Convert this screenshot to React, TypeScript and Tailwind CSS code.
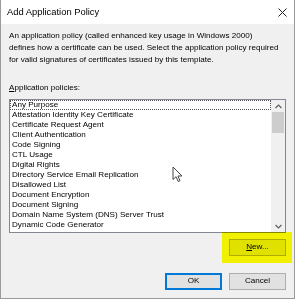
import React from "react";

const items = [
  "Any Purpose",
  "Attestation Identity Key Certificate",
  "Certificate Request Agent",
  "Client Authentication",
  "Code Signing",
  "CTL Usage",
  "Digital Rights",
  "Directory Service Email Replication",
  "Disallowed List",
  "Document Encryption",
  "Document Signing",
  "Domain Name System (DNS) Server Trust",
  "Dynamic Code Generator",
  "Early Launch Antimalware Driver",
];

export default function App() {
  return (
    <div
      className="relative w-[295px] h-[299px] bg-[#f0f0f0] border-x border-b border-[#9a9a9a] text-black overflow-hidden"
      style={{ fontFamily: '"Liberation Sans", Arial, sans-serif' }}
    >
      {/* title bar */}
      <div className="h-[24px] bg-white flex items-center justify-between pl-[6px] pr-[7px]">
        <span className="text-[9.4px] leading-none">Add Application Policy</span>
        <svg width="9" height="9" viewBox="0 0 9 9" className="block">
          <path d="M0.5 0.5 L8.5 8.5 M8.5 0.5 L0.5 8.5" stroke="#222" strokeWidth="1" fill="none" />
        </svg>
      </div>

      <div className="px-[8px]">
        <p className="mt-[6px] text-[8.1px] leading-[12px]">
          An application policy (called enhanced key usage in Windows 2000)
          <br />
          defines how a certificate can be used. Select the application policy required
          <br />
          for valid signatures of certificates issued by this template.
        </p>

        <div className="mt-[16px] text-[8.1px] leading-[12px]">
          <span className="underline">A</span>pplication policies:
        </div>

        {/* listbox */}
        <div className="mt-[5px] h-[134px] w-[277px] border border-[#828790] bg-white flex overflow-hidden">
          <div className="flex-1 flex flex-col">
            {items.map((t, i) => (
              <div
                key={t}
                className={
                  "h-[10px] shrink-0 leading-[10px] text-[8.1px] pl-[2px] whitespace-nowrap " +
                  (i === 0 ? "outline outline-1 outline-dotted outline-[#555] -outline-offset-1" : "")
                }
              >
                {t}
              </div>
            ))}
          </div>
          {/* scrollbar */}
          <div className="w-[14px] bg-[#f0f0f0] flex flex-col items-center">
            <div className="h-[12px] w-full flex items-center justify-center">
              <svg width="7" height="5" viewBox="0 0 7 5">
                <path d="M0.5 4 L3.5 1 L6.5 4" stroke="#606060" strokeWidth="1.2" fill="none" />
              </svg>
            </div>
            <div className="h-[21px] w-[12px] bg-[#cdcdcd]" />
            <div className="flex-1" />
            <div className="h-[12px] w-full flex items-center justify-center">
              <svg width="7" height="5" viewBox="0 0 7 5">
                <path d="M0.5 1 L3.5 4 L6.5 1" stroke="#606060" strokeWidth="1.2" fill="none" />
              </svg>
            </div>
          </div>
        </div>

        {/* New button */}
        <div className="mt-[6px] flex justify-end">
          <div className="relative">
            <div className="w-[57px] h-[17px] border border-[#adadad] bg-[#e1e1e1] flex items-center justify-center text-[8.1px]">
              <span>
                <span className="underline">N</span>ew...
              </span>
            </div>
            <div className="absolute -left-[7px] -top-[7px] w-[70px] h-[31px] bg-[#ffff00] mix-blend-multiply" />
          </div>
        </div>

        {/* OK / Cancel */}
        <div className="mt-[17px] flex justify-end gap-[7px]">
          <div className="w-[57px] h-[17px] border-2 border-[#0078d7] bg-[#e1e1e1] flex items-center justify-center text-[8.1px]">
            OK
          </div>
          <div className="w-[57px] h-[17px] border border-[#adadad] bg-[#e1e1e1] flex items-center justify-center text-[8.1px]">
            Cancel
          </div>
        </div>
      </div>

      {/* mouse cursor */}
      <svg
        className="absolute left-[171px] top-[166px]"
        width="12"
        height="17"
        viewBox="0 0 12 17"
      >
        <path
          d="M1 1 L1 13.5 L4 10.7 L6.2 15.5 L8 14.7 L5.9 10 L10 10 Z"
          fill="#ffffff"
          stroke="#444"
          strokeWidth="1"
          strokeLinejoin="round"
        />
      </svg>
    </div>
  );
}
